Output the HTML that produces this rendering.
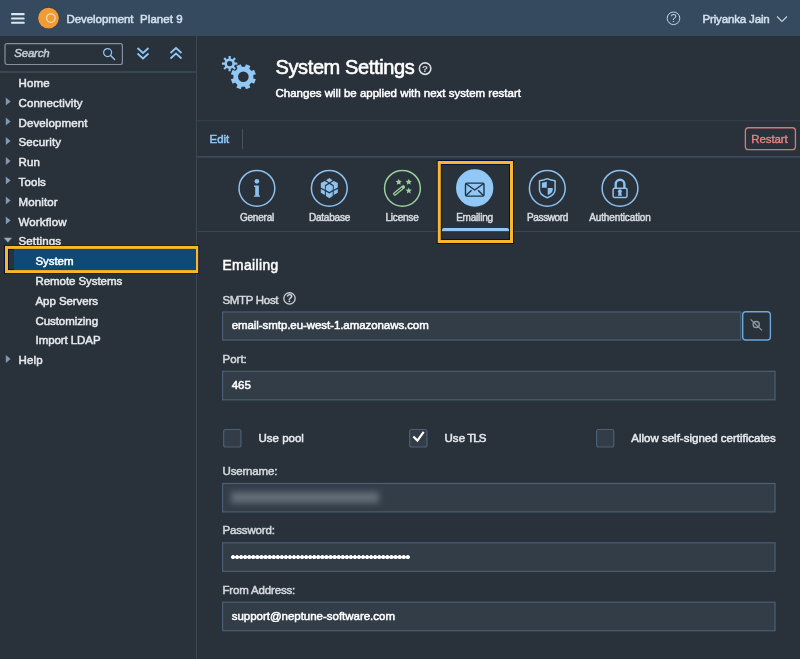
<!DOCTYPE html>
<html>
<head>
<meta charset="utf-8">
<title>System Settings</title>
<style>
*{box-sizing:border-box;margin:0;padding:0}
html,body{width:800px;height:659px;overflow:hidden;background:#29313a}
body{font-family:"Liberation Sans",sans-serif;font-size:11.5px;color:#e6eaee;position:relative;letter-spacing:0px;-webkit-text-stroke:0.5px}
.abs{position:absolute;white-space:nowrap}
/* header */
#hdr{left:0;top:0;width:800px;height:36px;background:#354a5f}
.ht{color:#d3e0ee;font-size:11.5px;line-height:14px;top:12.3px}
/* sidebar */
#side{left:0;top:36px;width:197px;height:623px;border-right:1px solid #3a4653}
#sdiv{left:0;top:71px;width:196px;height:2px;background:#394654}
#search{left:5px;top:43px;width:118px;height:22px}
#search span{position:absolute;left:9.3px;top:3.3px;font-style:italic;color:#c3ccd5;line-height:14px;letter-spacing:-0.22px}
.nav{left:18.5px;line-height:14px;color:#e6eaee;letter-spacing:0.13px;margin-top:-0.5px}
.sub{left:35.5px;letter-spacing:-0.07px}
.arr{left:6px;width:0;height:0;margin-top:-0.4px;border-left:4.7px solid #8197ac;border-top:3.9px solid transparent;border-bottom:3.9px solid transparent}
/* main */
.hl{height:1px;left:197px;width:603px}
#title{left:275.5px;top:55px;font-size:20px;line-height:24px;color:#fff;letter-spacing:-0.38px;-webkit-text-stroke:0.6px}
#subt{left:275.5px;top:85.8px;line-height:14px;color:#fff}
.lbl{left:222.5px;line-height:14px;color:#d3d9df}
.inp{left:222px;width:553.5px;height:30px}
.inp span{position:absolute;left:9.7px;top:7.4px;line-height:14px;color:#fff}
.cb{width:18.5px;height:19px;top:429px;border:1px solid #4a5d72;border-radius:2px;background:#323d48}
.cbl{top:431px;line-height:14px;color:#e6eaee}
.tab{top:169.5px;width:37px;height:37px;border-radius:50%;border:1.3px solid #86b8e3}
.tl{top:212.3px;font-size:10px;line-height:12px;color:#d5dadf;letter-spacing:-0.2px;text-align:center;width:80px}
</style>
</head>
<body>
<div id="root" style="position:absolute;left:0;top:0;width:800px;height:659px;will-change:transform">
<!-- HEADER -->
<div id="hdr" class="abs"></div>
<svg class="abs" style="left:10px;top:12px" width="16" height="14" viewBox="0 0 16 14"><g fill="#dbe6f1"><rect x="1.1" y="1.1" width="13.5" height="2.15" rx="0.6"/><rect x="1.1" y="5.4" width="13.5" height="2.15" rx="0.6"/><rect x="1.1" y="9.65" width="13.5" height="2.15" rx="0.6"/></g></svg>
<svg class="abs" style="left:36px;top:6px" width="25" height="25" viewBox="0 0 25 25"><circle cx="12.5" cy="12.1" r="10.9" fill="#2c3f55"/><circle cx="12.5" cy="12.1" r="10.4" fill="#f19b35"/><circle cx="14.9" cy="12.1" r="4.3" fill="none" stroke="#fcdcb4" stroke-width="1.25"/></svg>
<div class="abs ht" style="left:66.5px;letter-spacing:-0.07px">Development</div>
<div class="abs ht" style="left:140px;letter-spacing:0.08px">Planet 9</div>
<svg class="abs" style="left:666px;top:10.5px" width="15" height="15" viewBox="0 0 15 15"><circle cx="7.5" cy="7.3" r="6.3" fill="none" stroke="#c5d4e3" stroke-width="1"/><text x="7.5" y="11.2" font-size="11" font-family="Liberation Sans" text-anchor="middle" fill="#c5d4e3" style="-webkit-text-stroke:0.45px">?</text></svg>
<div class="abs ht" style="left:702.5px;letter-spacing:-0.15px">Priyanka Jain</div>
<svg class="abs" style="left:776px;top:15px" width="12" height="8" viewBox="0 0 12 8"><path d="M1 1.5 L6 6.5 L11 1.5" fill="none" stroke="#c5d4e3" stroke-width="1.1"/></svg>

<!-- SIDEBAR -->
<div id="side" class="abs"></div>
<div id="sdiv" class="abs"></div>
<svg class="abs" style="left:3px;top:41px" width="123" height="27" viewBox="0 0 123 27"><rect x="2.0" y="2.7" width="117.4" height="20.8" rx="2" fill="none" stroke="#8292a3" stroke-width="1.2"/></svg>
<div id="search" class="abs"><span>Search</span></div>
<svg class="abs" style="left:102px;top:47px" width="14" height="14" viewBox="0 0 14 14"><circle cx="5.6" cy="5.6" r="4" fill="none" stroke="#91c8f6" stroke-width="1.2"/><path d="M8.6 8.6 L12.6 12.6" stroke="#91c8f6" stroke-width="1.4" stroke-linecap="round"/></svg>
<svg class="abs" style="left:136px;top:46px" width="14" height="15" viewBox="0 0 14 15"><path d="M1.5 2 L7 7 L12.5 2 M1.5 7.5 L7 12.5 L12.5 7.5" fill="none" stroke="#91c8f6" stroke-width="1.7"/></svg>
<svg class="abs" style="left:169px;top:46px" width="14" height="15" viewBox="0 0 14 15"><path d="M1.5 7 L7 2 L12.5 7 M1.5 12.5 L7 7.5 L12.5 12.5" fill="none" stroke="#91c8f6" stroke-width="1.7"/></svg>

<div class="abs nav" style="top:76px">Home</div>
<div class="abs nav" style="top:96px">Connectivity</div>
<div class="abs nav" style="top:116px">Development</div>
<div class="abs nav" style="top:135.5px">Security</div>
<div class="abs nav" style="top:155.5px">Run</div>
<div class="abs nav" style="top:175px">Tools</div>
<div class="abs nav" style="top:195px">Monitor</div>
<div class="abs nav" style="top:215px">Workflow</div>
<div class="abs nav" style="top:234.5px">Settings</div>
<svg class="abs" style="left:0;top:90px" width="16" height="280" viewBox="0 0 16 280"><g fill="#8399ae"><polygon points="5.8,7.60 10.6,11.60 5.8,15.60"/><polygon points="5.8,27.60 10.6,31.60 5.8,35.60"/><polygon points="5.8,47.10 10.6,51.10 5.8,55.10"/><polygon points="5.8,67.10 10.6,71.10 5.8,75.10"/><polygon points="5.8,86.60 10.6,90.60 5.8,94.60"/><polygon points="5.8,106.60 10.6,110.60 5.8,114.60"/><polygon points="5.8,126.60 10.6,130.60 5.8,134.60"/><polygon points="5.8,265.10 10.6,269.10 5.8,273.10"/><polygon points="3.8,147.80 12,147.80 7.9,152.40" fill="#9aabbb"/></g></svg>
<!-- selected -->
<svg class="abs" style="left:2px;top:242px" width="201" height="36" viewBox="0 0 201 36"><rect x="2.55" y="3.45" width="194.10" height="28.10" fill="#29313a" stroke="#050d3d" stroke-width="0.9"/><rect x="6.40" y="7.30" width="186.40" height="20.40" fill="none" stroke="#050d3d" stroke-width="0.8"/><rect x="4.50" y="5.40" width="190.20" height="24.20" fill="none" stroke="#fbb72b" stroke-width="3"/></svg>
<div class="abs" style="left:14px;top:249px;width:182px;height:21px;background:#0f4a76"></div>
<div class="abs nav sub" style="top:254.5px;color:#fff">System</div>
<div class="abs nav sub" style="top:274px">Remote Systems</div>
<div class="abs nav sub" style="top:294px">App Servers</div>
<div class="abs nav sub" style="top:314px">Customizing</div>
<div class="abs nav sub" style="top:333.5px">Import LDAP</div>
<div class="abs nav" style="top:353.5px">Help</div>

<!-- MAIN -->
<svg class="abs" style="left:216px;top:50px" width="48" height="45" viewBox="0 0 48 45"><g fill="#91c8f6" fill-rule="evenodd"><path d="M12.62 8.40 L12.51 5.88 L14.79 5.88 L14.68 8.40 L16.59 9.19 L18.30 7.33 L19.92 8.95 L18.06 10.66 L18.85 12.57 L21.37 12.46 L21.37 14.74 L18.85 14.63 L18.06 16.54 L19.92 18.25 L18.30 19.87 L16.59 18.01 L14.68 18.80 L14.79 21.32 L12.51 21.32 L12.62 18.80 L10.71 18.01 L9.00 19.87 L7.38 18.25 L9.24 16.54 L8.45 14.63 L5.93 14.74 L5.93 12.46 L8.45 12.57 L9.24 10.66 L7.38 8.95 L9.00 7.33 L10.71 9.19 Z M10.95 13.60 a2.7 2.7 0 1 0 5.4 0 a2.7 2.7 0 1 0 -5.4 0 Z"/><path d="M29.01 16.79 L29.97 14.22 L34.36 16.04 L33.22 18.53 L35.57 20.88 L38.06 19.74 L39.88 24.13 L37.31 25.09 L37.31 28.41 L39.88 29.37 L38.06 33.76 L35.57 32.62 L33.22 34.97 L34.36 37.46 L29.97 39.28 L29.01 36.71 L25.69 36.71 L24.73 39.28 L20.34 37.46 L21.48 34.97 L19.13 32.62 L16.64 33.76 L14.82 29.37 L17.39 28.41 L17.39 25.09 L14.82 24.13 L16.64 19.74 L19.13 20.88 L21.48 18.53 L20.34 16.04 L24.73 14.22 L25.69 16.79 Z M22.05 26.75 a5.3 5.3 0 1 0 10.6 0 a5.3 5.3 0 1 0 -10.6 0 Z"/></g></svg>
<div id="title" class="abs">System Settings</div>
<svg class="abs" style="left:417px;top:61px" width="16" height="16" viewBox="0 0 16 16"><circle cx="8.1" cy="7.6" r="5.75" fill="none" stroke="#d8dbdf" stroke-width="1.6"/><text x="8.1" y="11.1" font-size="9.8" font-family="Liberation Sans" font-weight="bold" text-anchor="middle" fill="#cdd1d6" style="-webkit-text-stroke:0">?</text></svg>
<div id="subt" class="abs">Changes will be applied with next system restart</div>
<div class="abs hl" style="top:120px;height:2px;background:linear-gradient(#323c47 50%,#2c353f 50%)"></div>
<div class="abs hl" style="top:156px;height:2px;background:linear-gradient(#3a4a5b 50%,#344150 50%)"></div>
<div class="abs hl" style="top:231px;background:#3a4653"></div>
<div class="abs" style="left:209.5px;top:132px;line-height:14px;color:#91c8f6">Edit</div>
<div class="abs" style="left:242px;top:129px;width:1px;height:19.5px;background:#46535f"></div>
<div class="abs" style="left:751.3px;top:132.3px;line-height:14px;color:#e58284;letter-spacing:-0.11px;-webkit-text-stroke:0.4px">Restart</div>

<!-- tabs -->
<svg class="abs" style="left:236px;top:168px" width="41" height="41" viewBox="-20.90 -20.30 41 41"><circle cx="0" cy="0" r="17.9" fill="none" stroke="#8dc1ee" stroke-width="1.5"/><g fill="#8dc1ee"><circle cx="0" cy="-6.95" r="2.35"/><path d="M-2.9 -2.7 L1.95 -2.7 L1.95 7.1 L3.1 7.1 L3.1 8.5 L-3.0 8.5 L-3.0 7.1 L-1.7 7.1 L-1.7 -1.3 L-2.9 -1.3 Z"/></g></svg>
<svg class="abs" style="left:309px;top:168px" width="41" height="41" viewBox="-20.30 -20.30 41 41"><circle cx="0" cy="0" r="17.9" fill="none" stroke="#8dc1ee" stroke-width="1.5"/><g fill="#8dc1ee"><polygon points="0,-10.3 3.3,-8 0,-5.8 -3.3,-8"/><polygon points="0,-4.3 3.5,-2.4 3.5,1.8 0,3.8 -3.5,1.8 -3.5,-2.4"/><polygon points="-8.5,-5.2 -4.6,-7.3 -1.0,-5.3 -4.4,-3.0 -4.4,1.4 -8.5,-0.8"/><polygon points="8.5,-5.2 4.6,-7.3 1.0,-5.3 4.4,-3.0 4.4,1.4 8.5,-0.8"/><polygon points="-8.5,0.6 -4.4,2.8 -4.4,6.6 -8.5,4.4"/><polygon points="8.5,0.6 4.4,2.8 4.4,6.6 8.5,4.4"/><polygon points="-3.4,3.2 0,5.1 3.4,3.2 3.4,7.6 0,9.9 -3.4,7.6"/></g></svg>
<svg class="abs" style="left:382px;top:168px" width="41" height="41" viewBox="-20.45 -20.30 41 41"><circle cx="0" cy="0" r="17.9" fill="none" stroke="#9ad09c" stroke-width="1.5"/><g fill="#9ad09c"><polygon points="-3.70,-9.50 -2.79,-7.45 -0.56,-7.22 -2.23,-5.72 -1.76,-3.53 -3.70,-4.65 -5.64,-3.53 -5.17,-5.72 -6.84,-7.22 -4.61,-7.45"/><polygon points="6.30,-9.60 7.21,-7.55 9.44,-7.32 7.77,-5.82 8.24,-3.63 6.30,-4.75 4.36,-3.63 4.83,-5.82 3.16,-7.32 5.39,-7.55"/><polygon points="6.30,-0.80 7.21,1.25 9.44,1.48 7.77,2.98 8.24,5.17 6.30,4.05 4.36,5.17 4.83,2.98 3.16,1.48 5.39,1.25"/></g><g transform="rotate(-39.5 -3.4 2.1)"><rect x="-9.9" y="0.95" width="12.9" height="2.3" rx="0.7" fill="none" stroke="#9ad09c" stroke-width="1.3"/><rect x="0.6" y="0.95" width="2.4" height="2.3" fill="#9ad09c"/></g></svg>
<svg class="abs" style="left:454px;top:168px" width="41" height="41" viewBox="-20.70 -20.00 41 41"><circle cx="0" cy="0" r="17.9" fill="#91c8f6" stroke="#91c8f6" stroke-width="1.5"/><g fill="none" stroke="#233242" stroke-width="1.4" stroke-linejoin="round"><rect x="-9.2" y="-4.9" width="18.5" height="13" rx="1.3"/><path d="M-8.6 -4.2 L0 2.0 L8.7 -4.2 M-8.6 7.5 L-3.2 2.2 M8.7 7.5 L3.3 2.2"/></g></svg>
<svg class="abs" style="left:527px;top:168px" width="41" height="41" viewBox="-20.30 -20.30 41 41"><circle cx="0" cy="0" r="17.9" fill="none" stroke="#8dc1ee" stroke-width="1.5"/><path d="M0 -9.6 C-2.5 -8.3 -5 -7.7 -7.8 -7.5 L-7.8 1.5 C-7.8 5 -4 8 0 9.4 C4 8 7.8 5 7.8 1.5 L7.8 -7.5 C5 -7.7 2.5 -8.3 0 -9.6 Z" fill="none" stroke="#8dc1ee" stroke-width="1.5" stroke-linejoin="round"/><path d="M-5.4 -5.6 C-3.5 -5.8 -1.8 -6.3 -0.5 -6.9 L-0.5 -0.5 L-5.4 -0.5 Z" fill="#8dc1ee"/><path d="M0.4 -0.2 L5.4 -0.2 L5.4 1.6 C5.4 3.6 3 5.6 0.4 6.8 Z" fill="#8dc1ee"/></svg>
<svg class="abs" style="left:600px;top:168px" width="41" height="41" viewBox="-20.00 -20.30 41 41"><circle cx="0" cy="0" r="17.9" fill="none" stroke="#8dc1ee" stroke-width="1.5"/><rect x="-6.9" y="0.0" width="13.9" height="9.1" rx="1.4" fill="none" stroke="#8dc1ee" stroke-width="1.5"/><path d="M-4.3 -0.3 L-4.3 -4.2 A4.35 4.35 0 0 1 4.4 -4.2 L4.4 -0.3" fill="none" stroke="#8dc1ee" stroke-width="2.4"/><circle cx="-0.1" cy="2.9" r="1.95" fill="#8dc1ee"/><path d="M-1.2 3.4 L1.0 3.4 L1.9 7.4 L-2.1 7.4 Z" fill="#8dc1ee"/></svg>
<div class="abs tl" style="left:217px">General</div>
<div class="abs tl" style="left:289.5px">Database</div>
<div class="abs tl" style="left:362px">License</div>
<div class="abs tl" style="left:434.5px">Emailing</div>
<div class="abs tl" style="left:507.5px;letter-spacing:-0.38px">Password</div>
<div class="abs tl" style="left:580px;letter-spacing:-0.14px">Authentication</div>
<div class="abs" style="left:442px;top:228px;width:66.5px;height:3px;background:#91c8f6;border-radius:2px 2px 0 0"></div>
<svg class="abs" style="left:434px;top:158px" width="84" height="90" viewBox="0 0 84 90"><rect x="3.30" y="2.55" width="76.15" height="82.90" fill="none" stroke="#050d3d" stroke-width="0.9"/><rect x="7.15" y="6.40" width="68.45" height="75.20" fill="none" stroke="#050d3d" stroke-width="0.8"/><rect x="5.25" y="4.50" width="72.25" height="79.00" fill="none" stroke="#fbb72b" stroke-width="3"/></svg>

<!-- form -->
<svg class="abs" style="left:197px;top:36px" width="603" height="623" viewBox="0 0 603 623"><rect x="25.57" y="275.97" width="518.25" height="28.05" rx="0" fill="#323d48" stroke="#4c6177" stroke-width="1.15"/><rect x="25.57" y="335.27" width="552.45" height="28.55" rx="0" fill="#323d48" stroke="#4c6177" stroke-width="1.15"/><rect x="25.57" y="447.47" width="552.45" height="28.45" rx="0" fill="#323d48" stroke="#4c6177" stroke-width="1.15"/><rect x="25.57" y="506.78" width="552.45" height="28.55" rx="0" fill="#323d48" stroke="#4c6177" stroke-width="1.15"/><rect x="25.57" y="566.18" width="552.45" height="28.55" rx="0" fill="#323d48" stroke="#4c6177" stroke-width="1.15"/><rect x="26.67" y="393.47" width="17.25" height="17.55" rx="2" fill="#323d48" stroke="#4c6177" stroke-width="1.15"/><rect x="212.68" y="393.47" width="17.25" height="17.55" rx="2" fill="#323d48" stroke="#4c6177" stroke-width="1.15"/><rect x="399.57" y="393.47" width="17.25" height="17.55" rx="2" fill="#323d48" stroke="#4c6177" stroke-width="1.15"/><rect x="545.70" y="275.80" width="27.70" height="28.20" rx="3.2" fill="none" stroke="#6ea7dc" stroke-width="1.4"/><rect x="548.38" y="91.77" width="50.05" height="21.85" rx="3.2" fill="none" stroke="#d4797b" stroke-width="1.35"/></svg>
<div class="abs" style="left:222.5px;top:257px;font-size:13.8px;line-height:17px;color:#fff;letter-spacing:0.4px;-webkit-text-stroke:0.5px">Emailing</div>
<div class="abs lbl" style="top:292.5px;letter-spacing:-0.32px">SMTP Host</div>
<svg class="abs" style="left:282px;top:291px" width="16" height="16" viewBox="0 0 16 16"><circle cx="7.5" cy="7.4" r="5.65" fill="none" stroke="#cdd2d8" stroke-width="1.3"/><text x="7.5" y="11.3" font-size="11" font-family="Liberation Sans" font-weight="bold" text-anchor="middle" fill="#d8dce1" style="-webkit-text-stroke:0">?</text></svg>
<div class="abs inp" style="top:311px;width:519.5px"><span style="letter-spacing:-0.07px">email-smtp.eu-west-1.amazonaws.com</span></div>
<svg class="abs" style="left:748px;top:317px" width="17" height="16" viewBox="0 0 17 16"><circle cx="8.2" cy="7.6" r="3.1" fill="none" stroke="#8c9caa" stroke-width="1.3"/><path d="M2.6 2.4 L14 13.4" stroke="#8c9caa" stroke-width="1.3"/></svg>
<div class="abs lbl" style="top:351.5px">Port:</div>
<div class="abs inp" style="top:370.5px"><span>465</span></div>

<div class="abs cbl" style="left:258.5px">Use pool</div>
<svg class="abs" style="left:409px;top:429px" width="19" height="19" viewBox="0 0 19 19"><path d="M4.3 7.5 L8.4 11.6 L14.7 2.8" fill="none" stroke="#fff" stroke-width="2.2"/></svg>
<div class="abs cbl" style="left:444.5px;letter-spacing:0.05px">Use<span style="letter-spacing:-0.9px"> TLS</span></div>
<div class="abs cbl" style="left:631.3px">Allow self-signed certificates</div>

<div class="abs lbl" style="top:464px;letter-spacing:-0.17px">Username:</div>
<div class="abs inp" style="top:483px"></div>
<div class="abs" style="left:231px;top:492px;width:148px;height:11px;background:#8b96a1;filter:blur(3px);opacity:.55"></div>
<div class="abs lbl" style="top:523px;letter-spacing:-0.17px">Password:</div>
<div class="abs inp" style="top:542px"></div>
<div class="abs" style="left:231px;top:555px;width:179.3px;height:5px;background:radial-gradient(circle at 2.04px 2.1px,#fff 1.7px,rgba(255,255,255,0) 2.3px) 0 0/4.075px 5px repeat-x"></div>
<div class="abs lbl" style="top:583px;letter-spacing:-0.17px">From Address:</div>
<div class="abs inp" style="top:601.5px"><span style="letter-spacing:-0.02px">support@neptune-software.com</span></div>
</div>
</body>
</html>
